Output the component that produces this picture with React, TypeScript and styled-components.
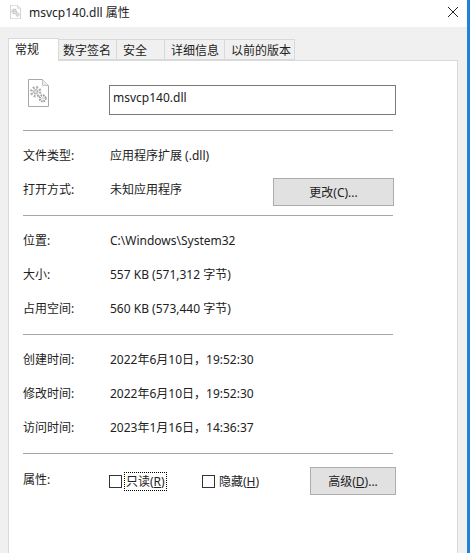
import React from 'react';
import styled, { createGlobalStyle } from 'styled-components';

const GlobalStyle = createGlobalStyle`
  html, body {
    margin: 0;
    padding: 0;
    background: #ffffff;
  }
  body {
    font-family: "Noto Sans", "Noto Sans CJK SC", "Liberation Sans", sans-serif;
    font-size: 12px;
    color: #222;
  }
`;

const Dialog = styled.div`
  width: 470px;
  height: 553px;
  box-sizing: border-box;
  border-right: 3px solid #1f84d8;
  overflow: hidden;
  background: #f0f0f0;
`;

const TitleBar = styled.div`
  height: 27px;
  box-sizing: border-box;
  background: #fff;
  display: flex;
  align-items: center;
  padding: 0 8px 3px 10px;
  gap: 8px;
`;

const TitleText = styled.span`
  flex: 1;
`;

const CloseButton = styled.svg`
  width: 12px;
  height: 12px;
`;

const Body = styled.div`
  padding: 10px 9px 0 8px;
`;

const TabStrip = styled.div`
  display: flex;
  align-items: flex-end;
  height: 23px;
`;

const Tab = styled.div<{ $active?: boolean; $width: number; $pad: number }>`
  width: ${({ $width }) => $width}px;
  height: ${({ $active }) => ($active ? 23 : 21)}px;
  box-sizing: border-box;
  display: flex;
  align-items: center;
  padding-left: ${({ $pad }) => $pad}px;
  padding-bottom: ${({ $active }) => ($active ? 2 : 0)}px;
  white-space: nowrap;
  background: ${({ $active }) => ($active ? '#fff' : '#f0f0f0')};
  border: 1px solid #d9d9d9;
  border-left-width: ${({ $active }) => ($active ? 1 : 0)}px;
  border-bottom-width: ${({ $active }) => ($active ? 0 : 1)}px;
  margin-bottom: ${({ $active }) => ($active ? -1 : 0)}px;
  position: relative;
`;

const Panel = styled.div`
  height: 493px;
  box-sizing: border-box;
  background: #fff;
  border: 1px solid #d9d9d9;
  border-bottom: none;
  padding: 0 14px;
`;

const HeaderRow = styled.div`
  display: flex;
  align-items: flex-start;
  height: 69px;
  box-sizing: border-box;
  padding-top: 18px;
`;

const IconSlot = styled.div`
  width: 86px;
  padding-left: 5px;
  box-sizing: border-box;
`;

const NameField = styled.div`
  width: 287px;
  height: 30px;
  margin-top: 6px;
  box-sizing: border-box;
  border: 1px solid #7a7a7a;
  padding-left: 3px;
  line-height: 24px;
`;

const Rule = styled.div`
  height: 1px;
  width: 370px;
  background: #a6a6a6;
`;

const Section = styled.div<{ $height: number; $lift?: number }>`
  height: ${({ $height }) => $height}px;
  box-sizing: border-box;
  padding-bottom: ${({ $lift }) => $lift ?? 0}px;
  display: flex;
  flex-direction: column;
  justify-content: center;
  gap: 14px;
`;

const Row = styled.div`
  display: flex;
  align-items: center;
  height: 20px;
`;

const Label = styled.div<{ $width?: number; $lift?: number }>`
  width: ${({ $width }) => $width ?? 87}px;
  margin-bottom: ${({ $lift }) => $lift ?? 0}px;
`;

const Value = styled.div`
  flex: 0 0 163px;
`;

const Button = styled.div<{ $width: number; $drop?: number }>`
  width: ${({ $width }) => $width}px;
  height: 28px;
  margin-top: ${({ $drop }) => $drop ?? 0}px;
  flex: none;
  box-sizing: border-box;
  background: #e1e1e1;
  border: 1px solid #adadad;
  display: flex;
  align-items: center;
  justify-content: center;
`;

const Check = styled.label<{ $width: number }>`
  width: ${({ $width }) => $width}px;
  display: flex;
  align-items: center;
  gap: 3px;
`;

const Box = styled.span`
  width: 13px;
  height: 13px;
  box-sizing: border-box;
  border: 1px solid #333;
`;

const CheckText = styled.span<{ $focus?: boolean }>`
  outline: ${({ $focus }) => ($focus ? '1px dotted #000' : 'none')};
  padding: 0 1px;
  line-height: 17px;
`;

const Key = styled.span`
  text-decoration: underline;
`;

const FileGears = ({ width, height }: { width: number; height: number }) => (
  <svg width={width} height={height} viewBox="0 0 21 28">
    <path d="M0.5 0.5H14.5L20.5 6.5V27.5H0.5Z" fill="#fff" stroke="#a8a8a8" />
    <path d="M14.5 0.5V6.5H20.5" fill="#ececec" stroke="#c4c4c4" />
    <circle cx="7.7" cy="12.7" r="4.4" fill="none" stroke="#adadad" strokeWidth="2.6" strokeDasharray="1.9 1.55" />
    <circle cx="7.7" cy="12.7" r="2.2" fill="#d3dade" stroke="#a0a0a0" strokeWidth=".7" />
    <circle cx="14.7" cy="19.3" r="3" fill="none" stroke="#9a9a9a" strokeWidth="2" strokeDasharray="1.5 .85" />
    <circle cx="14.7" cy="19.3" r="1.3" fill="#d3dade" />
  </svg>
);

const tabs = [
  { label: '常规', width: 51, pad: 6, active: true },
  { label: '数字签名', width: 58, pad: 4 },
  { label: '安全', width: 48, pad: 6 },
  { label: '详细信息', width: 60, pad: 6 },
  { label: '以前的版本', width: 70, pad: 6 },
];

const App = () => (
  <>
    <GlobalStyle />
    <Dialog>
      <TitleBar>
        <FileGears width={11} height={14} />
        <TitleText>msvcp140.dll 属性</TitleText>
        <CloseButton viewBox="0 0 12 12">
          <path d="M1 1L11 11M11 1L1 11" stroke="#222" strokeWidth="1" />
        </CloseButton>
      </TitleBar>
      <Body>
        <TabStrip>
          {tabs.map((t) => (
            <Tab key={t.label} $active={t.active} $width={t.width} $pad={t.pad}>
              {t.label}
            </Tab>
          ))}
        </TabStrip>
        <Panel>
          <HeaderRow>
            <IconSlot>
              <FileGears width={21} height={28} />
            </IconSlot>
            <NameField>msvcp140.dll</NameField>
          </HeaderRow>
          <Rule />
          <Section $height={84} $lift={2}>
            <Row>
              <Label>文件类型:</Label>
              <Value>应用程序扩展 (.dll)</Value>
            </Row>
            <Row>
              <Label>打开方式:</Label>
              <Value>未知应用程序</Value>
              <Button $width={121} $drop={6}>更改(C)...</Button>
            </Row>
          </Section>
          <Rule />
          <Section $height={118} $lift={2}>
            <Row>
              <Label>位置:</Label>
              <Value>C:\Windows\System32</Value>
            </Row>
            <Row>
              <Label>大小:</Label>
              <Value>557 KB (571,312 字节)</Value>
            </Row>
            <Row>
              <Label>占用空间:</Label>
              <Value>560 KB (573,440 字节)</Value>
            </Row>
          </Section>
          <Rule />
          <Section $height={118} $lift={2}>
            <Row>
              <Label>创建时间:</Label>
              <Value>2022年6月10日，19:52:30</Value>
            </Row>
            <Row>
              <Label>修改时间:</Label>
              <Value>2022年6月10日，19:52:30</Value>
            </Row>
            <Row>
              <Label>访问时间:</Label>
              <Value>2023年1月16日，14:36:37</Value>
            </Row>
          </Section>
          <Rule />
          <Section $height={54}>
            <Row>
              <Label $width={86} $lift={4}>属性:</Label>
              <Check $width={93}>
                <Box />
                <CheckText $focus>只读(<Key>R</Key>)</CheckText>
              </Check>
              <Check $width={108}>
                <Box />
                <CheckText>隐藏(<Key>H</Key>)</CheckText>
              </Check>
              <Button $width={86}>高级(<Key>D</Key>)...</Button>
            </Row>
          </Section>
        </Panel>
      </Body>
    </Dialog>
  </>
);

export default App;
